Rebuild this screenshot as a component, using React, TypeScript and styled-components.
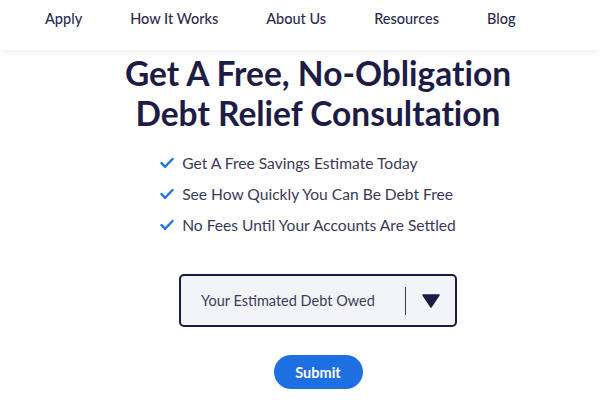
import React from "react";
import styled, { createGlobalStyle } from "styled-components";

const GlobalStyle = createGlobalStyle`
  html, body {
    margin: 0;
    padding: 0;
    background: #ffffff;
    font-family: Lato, "Noto Sans", sans-serif;
    -webkit-font-smoothing: antialiased;
  }
`;

const Page = styled.div`
  width: 600px;
  height: 400px;
  overflow: hidden;
  display: flex;
  flex-direction: column;
`;

const Header = styled.header`
  height: 50px;
  flex: none;
  background: #ffffff;
  box-shadow: 0 3px 6px rgba(0, 0, 0, 0.06);
  display: flex;
  align-items: flex-start;
  padding: 10px 0 0 45px;
  box-sizing: border-box;
  position: relative;
  z-index: 1;
`;

const Nav = styled.nav`
  display: flex;
  gap: 48px;
`;

const NavLink = styled.a`
  font-size: 14.5px;
  font-weight: 500;
  color: #2c2b4e;
  text-decoration: none;
  line-height: 18px;
`;

const Main = styled.main`
  display: flex;
  flex-direction: column;
  align-items: center;
  padding-left: 36px;
`;

const Headline = styled.h1`
  margin: 3px 0 0;
  font-size: 33.5px;
  line-height: 40px;
  font-weight: 700;
  color: #1e1c45;
  text-align: center;
  font-variant-ligatures: none;
`;

const Benefits = styled.ul`
  list-style: none;
  margin: 20px 0 0;
  padding: 0 20px 0 0;
  display: flex;
  flex-direction: column;
  gap: 11px;
`;

const Benefit = styled.li`
  display: flex;
  align-items: center;
  gap: 8px;
  font-size: 15.6px;
  line-height: 20px;
  color: #3b3958;
`;

const Check = () => (
  <svg width="14" height="12" viewBox="0 0 14 12" aria-hidden>
    <path
      d="M1.5 6.2 L5.2 9.8 L12.5 2"
      fill="none"
      stroke="#1f74e6"
      strokeWidth="2.4"
      strokeLinecap="round"
      strokeLinejoin="round"
    />
  </svg>
);

const Select = styled.div`
  margin-top: 39px;
  width: 278px;
  height: 53px;
  box-sizing: border-box;
  border: 2px solid #1c1a44;
  border-radius: 5px;
  background: #f3f4f7;
  display: flex;
  align-items: center;
  padding: 0 15px 0 20px;
`;

const SelectLabel = styled.span`
  flex: 1;
  font-size: 14.5px;
  color: #3d3b5c;
`;

const Divider = styled.span`
  width: 1.5px;
  height: 28px;
  background: #3a3860;
  margin-right: 16px;
`;

const Arrow = () => (
  <svg width="18" height="14" viewBox="0 0 18 14" aria-hidden>
    <path d="M1 1 H17 L9 13 Z" fill="#1e1c45" stroke="#1e1c45" strokeWidth="1.5" strokeLinejoin="round" />
  </svg>
);

const SubmitButton = styled.button`
  margin-top: 28px;
  width: 89px;
  height: 34px;
  border: none;
  border-radius: 17px;
  background: #1e6fe2;
  color: #ffffff;
  font-family: Lato, "Noto Sans", sans-serif;
  font-size: 14.5px;
  font-weight: 700;
  cursor: pointer;
`;

const links = ["Apply", "How It Works", "About Us", "Resources", "Blog"];
const points = [
  "Get A Free Savings Estimate Today",
  "See How Quickly You Can Be Debt Free",
  "No Fees Until Your Accounts Are Settled",
];

export default function App() {
  return (
    <>
      <GlobalStyle />
      <Page>
        <Header>
          <Nav>
            {links.map((l) => (
              <NavLink key={l} href="#">
                {l}
              </NavLink>
            ))}
          </Nav>
        </Header>
        <Main>
          <Headline>
            Get A Free, No-Obligation
            <br />
            Debt Relief Consultation
          </Headline>
          <Benefits>
            {points.map((p) => (
              <Benefit key={p}>
                <Check />
                {p}
              </Benefit>
            ))}
          </Benefits>
          <Select>
            <SelectLabel>Your Estimated Debt Owed</SelectLabel>
            <Divider />
            <Arrow />
          </Select>
          <SubmitButton>Submit</SubmitButton>
        </Main>
      </Page>
    </>
  );
}
